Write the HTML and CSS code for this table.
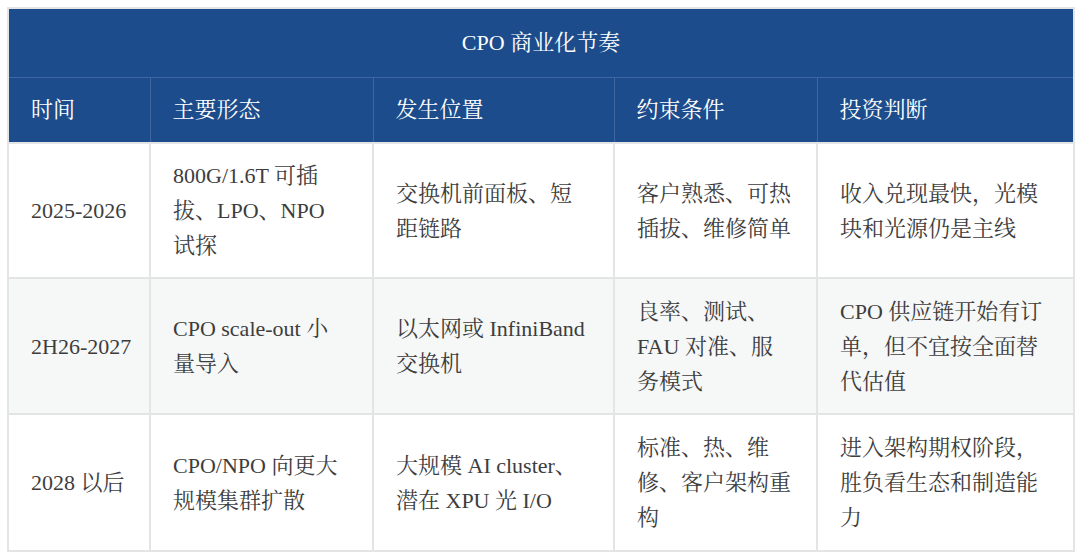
FILE: index.html
```html
<!DOCTYPE html>
<html lang="zh-CN">
<head>
<meta charset="utf-8">
<title>CPO 商业化节奏</title>
<link rel="stylesheet" href="styles.css">
</head>
<body>
<table class="rhythm">
  <colgroup>
    <col class="c-time">
    <col class="c-form">
    <col class="c-place">
    <col class="c-limit">
    <col class="c-judge">
  </colgroup>
  <thead>
    <tr class="title-row">
      <th colspan="5" class="title">CPO 商业化节奏</th>
    </tr>
    <tr class="head-row">
      <th>时间</th>
      <th>主要形态</th>
      <th>发生位置</th>
      <th>约束条件</th>
      <th>投资判断</th>
    </tr>
  </thead>
  <tbody>
    <tr class="row row-a">
      <td>2025-2026</td>
      <td>800G/1.6T 可插<br>拔、LPO、NPO<br>试探</td>
      <td>交换机前面板、短<br>距链路</td>
      <td>客户熟悉、可热<br>插拔、维修简单</td>
      <td>收入兑现最快，光模<br>块和光源仍是主线</td>
    </tr>
    <tr class="row row-b">
      <td>2H26-2027</td>
      <td>CPO scale-out 小<br>量导入</td>
      <td>以太网或 InfiniBand<br>交换机</td>
      <td>良率、测试、<br>FAU 对准、服<br>务模式</td>
      <td>CPO 供应链开始有订<br>单，但不宜按全面替<br>代估值</td>
    </tr>
    <tr class="row row-c">
      <td>2028 以后</td>
      <td>CPO/NPO 向更大<br>规模集群扩散</td>
      <td>大规模 AI cluster、<br>潜在 XPU 光 I/O</td>
      <td>标准、热、维<br>修、客户架构重<br>构</td>
      <td>进入架构期权阶段，<br>胜负看生态和制造能<br>力</td>
    </tr>
  </tbody>
</table>
</body>
</html>
```
FILE: styles.css
```css
html, body {
  margin: 0;
  padding: 0;
  background: #ffffff;
}

body {
  padding: 7px 7px 0 7px;
  font-family: "Liberation Serif", "Noto Serif CJK SC", "Noto Sans CJK SC", serif;
  font-size: 22px;
  color: #3d3d3d;
}

.rhythm {
  width: 1066px;
  table-layout: fixed;
  border-collapse: collapse;
  border: 2px solid #e2e4e6;
}

.c-time { width: 142px; }
.c-form { width: 223px; }
.c-place { width: 241px; }
.c-limit { width: 203px; }
.c-judge { width: 257px; }

.rhythm th {
  background: #1c4c8b;
  color: #ffffff;
  font-weight: normal;
  text-align: left;
  padding: 0 10px 0 22px;
  border: 1px solid #3f66a0;
  border-top-color: #1c4c8b;
  line-height: 35px;
}

.rhythm th.title {
  text-align: center;
  padding: 0;
  border-top: 2px solid #e2e4e6;
  border-left-color: #1c4c8b;
  border-right-color: #1c4c8b;
}

.rhythm .head-row th:first-child { border-left-color: #1c4c8b; }
.rhythm .head-row th:last-child { border-right-color: #1c4c8b; }
.rhythm .head-row th { border-bottom-color: #1c4c8b; }

.title-row { height: 69px; }
.head-row { height: 66px; }

.rhythm td {
  padding: 0 10px 0 22px;
  border: 2px solid #e2e4e6;
  line-height: 35px;
  vertical-align: middle;
}

.row-a { height: 135px; }
.row-b { height: 136px; background: #f6f7f7; }
.row-c { height: 137px; }
```
